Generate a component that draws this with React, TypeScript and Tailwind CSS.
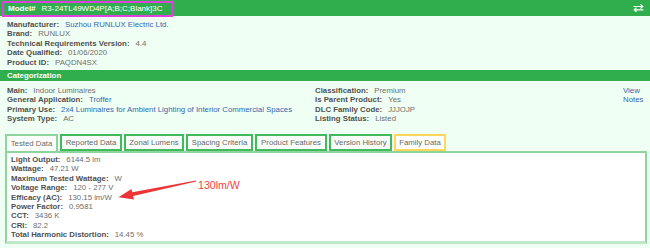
import React from "react";

const Row = ({ label, value, blue }: { label: string; value: string; blue?: boolean }) => (
  <div className="h-[9.4px] leading-[9.4px] whitespace-nowrap">
    <span className="font-bold text-[#505050]">{label}</span>
    <span className={"ml-[6px] " + (blue ? "text-[#3567b0]" : "text-[#6e6e6e]")}>{value}</span>
  </div>
);

const tabs: { name: string; w: string; active?: boolean; yellow?: boolean }[] = [
  { name: "Tested Data", w: "w-[53px]", active: true },
  { name: "Reported Data", w: "w-[62px]" },
  { name: "Zonal Lumens", w: "w-[60px]" },
  { name: "Spacing Criteria", w: "w-[67px]" },
  { name: "Product Features", w: "w-[72px]" },
  { name: "Version History", w: "w-[63px]" },
  { name: "Family Data", w: "w-[52px]", yellow: true },
];

export default function App() {
  return (
    <div
      className="relative w-[650px] h-[248px] overflow-hidden bg-[#f0fff3] text-[7.8px]"
      style={{ fontFamily: '"Liberation Sans", Arial, sans-serif' }}
    >
      {/* Header */}
      <div className="h-[16px] bg-[#30ad4c] flex items-start justify-between pl-[2px] pr-[6px]">
        <div className="mt-[1px] h-[16px] w-[171px] border-2 border-[#e13fe0] flex items-center pl-[4px] text-white text-[8px] whitespace-nowrap relative z-10">
          <span className="font-bold">Model#</span>
          <span className="ml-[6px]">R3-24TL49WD4P[A;B;C;Blank]3C</span>
        </div>
        <svg width="11" height="8" viewBox="0 0 11 8" className="mt-[4px]">
          <path d="M0.5 2.5 H9.5 M7.5 0.5 L9.8 2.5 L7.5 4.5" stroke="#f4fff6" strokeWidth="1.2" fill="none" />
          <path d="M10.5 5.8 H1.5 M3.5 3.8 L1.2 5.8 L3.5 7.8" stroke="#f4fff6" strokeWidth="1.2" fill="none" />
        </svg>
      </div>

      {/* Info */}
      <div className="pl-[7px] pt-[4px]">
        <Row label="Manufacturer:" value="Suzhou RUNLUX Electric Ltd." blue />
        <Row label="Brand:" value="RUNLUX" />
        <Row label="Technical Requirements Version:" value="4.4" />
        <Row label="Date Qualified:" value="01/06/2020" />
        <Row label="Product ID:" value="PAQDN4SX" />
      </div>

      {/* Categorization bar */}
      <div className="mt-[3px] h-[11px] bg-[#30ad4c] pl-[7px] flex items-center text-white font-bold">
        Categorization
      </div>

      <div className="pt-[5px] pl-[7px] flex">
        <div className="w-[308px]">
          <Row label="Main:" value="Indoor Luminaires" />
          <Row label="General Application:" value="Troffer" blue />
          <Row label="Primary Use:" value="2x4 Luminaires for Ambient Lighting of Interior Commercial Spaces" blue />
          <Row label="System Type:" value="AC" />
        </div>
        <div className="w-[308px]">
          <Row label="Classification:" value="Premium" />
          <Row label="Is Parent Product:" value="Yes" />
          <Row label="DLC Family Code:" value="JJJOJP" />
          <Row label="Listing Status:" value="Listed" />
        </div>
        <div className="text-[#3567b0] leading-[9.4px]">
          <div>View</div>
          <div>Notes</div>
        </div>
      </div>

      {/* Tabs */}
      <div className="mt-[10.5px] ml-[5px] flex gap-[2px] h-[17px]">
        {tabs.map((t) => (
          <div
            key={t.name}
            className={
              t.w +
              " h-[17px] flex items-center justify-center text-[#6a6a6a] whitespace-nowrap border-2 " +
              (t.active
                ? "border-[#8fd39d] border-b-0 bg-[#fbfefb]"
                : t.yellow
                ? "border-[#ffd65a] bg-[#fbfefb]"
                : "border-[#43b95e] bg-[#f7fcf8]")
            }
          >
            {t.name}
          </div>
        ))}
      </div>

      {/* Content box */}
      <div className="ml-[5px] w-[642px] h-[93px] bg-white border-2 border-[#8fd39d] border-b-[3px] border-b-[#bfe8c8] pl-[4px] pt-[2px]">
        <Row label="Light Output:" value="6144.5 lm" />
        <Row label="Wattage:" value="47.21 W" />
        <Row label="Maximum Tested Wattage:" value="W" />
        <Row label="Voltage Range:" value="120 - 277 V" />
        <Row label="Efficacy (AC):" value="130.15 lm/W" />
        <Row label="Power Factor:" value="0.9581" />
        <Row label="CCT:" value="3436 K" />
        <Row label="CRI:" value="82.2" />
        <Row label="Total Harmonic Distortion:" value="14.45 %" />
      </div>

      {/* Annotation */}
      <svg className="absolute left-0 top-0 pointer-events-none" width="650" height="248">
        <polygon
          points="195.9,180.4 132.3,192.3 131.4,188.9 118.5,197.2 134,199.4 133.1,195.9 196.1,181.6"
          fill="#ee3535"
        />
      </svg>
      <div className="absolute left-[198px] top-[178px] text-[10.6px] leading-[14px] text-[#f04545] whitespace-nowrap">
        130lm/W
      </div>
    </div>
  );
}
